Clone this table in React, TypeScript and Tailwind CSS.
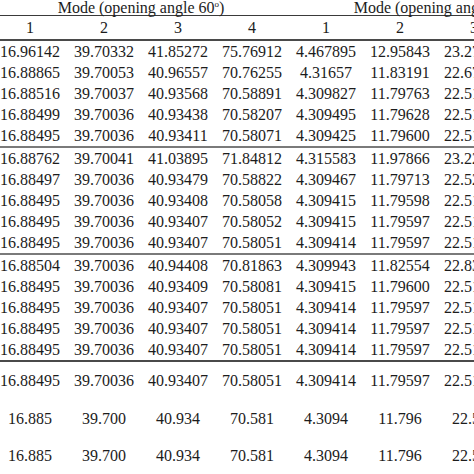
import React from "react"

type Row = string[]

const groups: Row[][] = [
  [
    ["16.96142", "39.70332", "41.85272", "75.76912", "4.467895", "12.95843", "23.27354", "38.41207"],
    ["16.88865", "39.70053", "40.96557", "70.76255", "4.31657", "11.83191", "22.67416", "36.95310"],
    ["16.88516", "39.70037", "40.93568", "70.58891", "4.309827", "11.79763", "22.51958", "36.80144"],
    ["16.88499", "39.70036", "40.93438", "70.58207", "4.309495", "11.79628", "22.51390", "36.79512"],
    ["16.88495", "39.70036", "40.93411", "70.58071", "4.309425", "11.79600", "22.51342", "36.79420"],
  ],
  [
    ["16.88762", "39.70041", "41.03895", "71.84812", "4.315583", "11.97866", "23.22615", "37.62038"],
    ["16.88497", "39.70036", "40.93479", "70.58822", "4.309467", "11.79713", "22.52073", "36.80091"],
    ["16.88495", "39.70036", "40.93408", "70.58058", "4.309415", "11.79598", "22.51331", "36.79402"],
    ["16.88495", "39.70036", "40.93407", "70.58052", "4.309415", "11.79597", "22.51330", "36.79400"],
    ["16.88495", "39.70036", "40.93407", "70.58051", "4.309414", "11.79597", "22.51330", "36.79400"],
  ],
  [
    ["16.88504", "39.70036", "40.94408", "70.81863", "4.309943", "11.82554", "22.83172", "37.05226"],
    ["16.88495", "39.70036", "40.93409", "70.58081", "4.309415", "11.79600", "22.51348", "36.79413"],
    ["16.88495", "39.70036", "40.93407", "70.58051", "4.309414", "11.79597", "22.51330", "36.79400"],
    ["16.88495", "39.70036", "40.93407", "70.58051", "4.309414", "11.79597", "22.51330", "36.79400"],
    ["16.88495", "39.70036", "40.93407", "70.58051", "4.309414", "11.79597", "22.51330", "36.79400"],
  ],
]

const converged: Row = ["16.88495", "39.70036", "40.93407", "70.58051", "4.309414", "11.79597", "22.51330", "36.79400"]
const rounded: Row = ["16.885", "39.700", "40.934", "70.581", "4.3094", "11.796", "22.513", "36.794"]

function DataRow({ cells, height }: { cells: Row; height: string }) {
  return (
    <div className={`grid grid-cols-8 items-center ${height}`}>
      {cells.map((c, i) => (
        <div key={i} className="text-center whitespace-nowrap leading-none">
          {c}
        </div>
      ))}
    </div>
  )
}

export default function App() {
  return (
    <div className="w-[474px] h-[474px] overflow-hidden bg-white text-[16px] text-[#1c1c1c] font-['Liberation_Serif',serif]">
      <div className="ml-[-7px] w-[592px]">
        {/* caption row */}
        <div className="grid grid-cols-2 h-[15px] leading-[14px]">
          <div className="text-center whitespace-nowrap">
            Mode (opening angle 60<span className="text-[9px] align-super leading-none">o</span>)
          </div>
          <div className="text-center whitespace-nowrap">
            Mode (opening angle 90<span className="text-[9px] align-super leading-none">o</span>)
          </div>
        </div>
        <div className="h-px bg-[#3a3a3a]" />

        {/* mode numbers */}
        <div className="grid grid-cols-8 items-center h-[23px]">
          {["1", "2", "3", "4", "1", "2", "3", "4"].map((n, i) => (
            <div key={i} className="text-center leading-none">
              {n}
            </div>
          ))}
        </div>
        <div className="h-[2px] bg-[#4a4a4a]" />

        {groups.map((g, gi) => (
          <div key={gi}>
            {g.map((r, ri) => (
              <DataRow key={ri} cells={r} height="h-[21px]" />
            ))}
            <div className={gi === 2 ? "h-[2px] bg-[#4a4a4a]" : "h-[2px] bg-[#7a7a7a]"} />
          </div>
        ))}

        <DataRow cells={converged} height="h-[38px]" />
        <DataRow cells={rounded} height="h-[38px]" />
        <DataRow cells={rounded} height="h-[36px]" />
      </div>
    </div>
  )
}
